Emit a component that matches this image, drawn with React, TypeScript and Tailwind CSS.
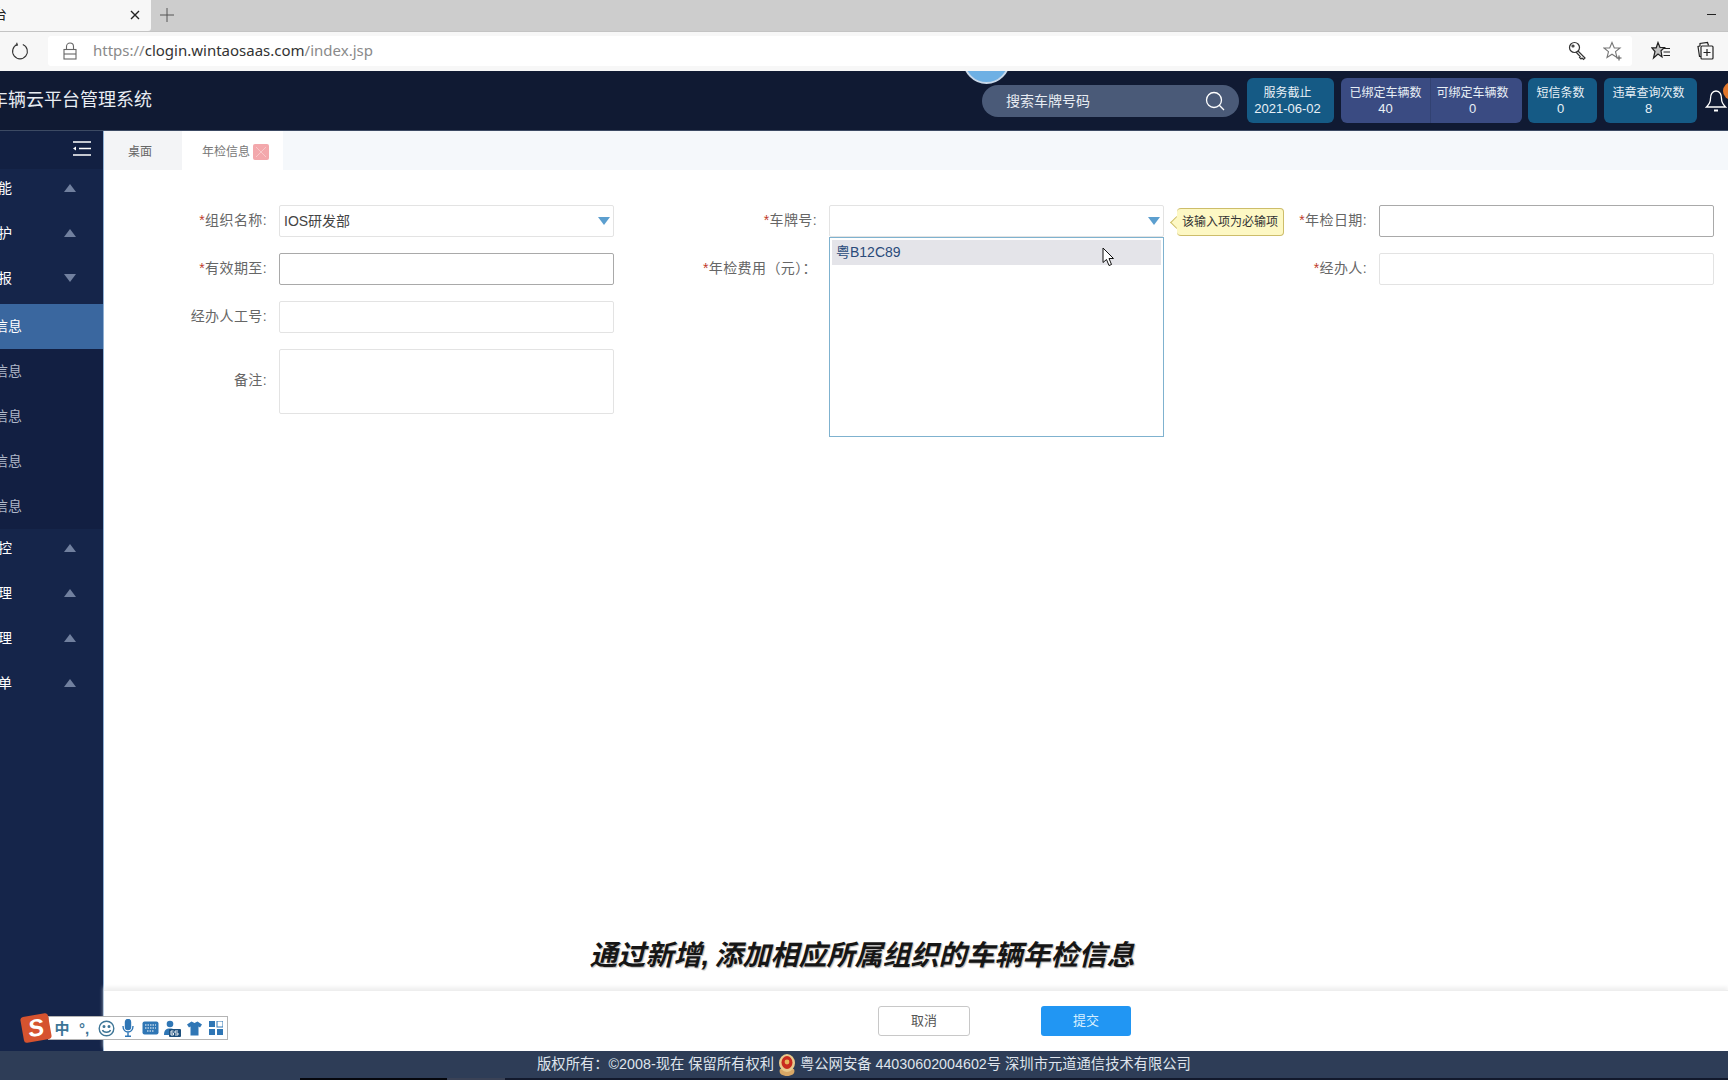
import React from "react";

const Tri = ({ down }: { down?: boolean }) => (
  <svg width="12" height="8" viewBox="0 0 12 8" className="shrink-0">
    <path d={down ? "M0 0H12L6 8Z" : "M6 0L12 8H0Z"} fill="#71809f" />
  </svg>
);

const Reload = () => (
  <svg width="18" height="18" viewBox="0 0 18 18" fill="none" stroke="#333" strokeWidth="1.1">
    <path d="M6.2 2.6A7.4 7.4 0 1 0 11.8 2.6" />
    <path d="M5.6 0.8 6.4 3 3.9 3.4" />
  </svg>
);

const LockIcon = () => (
  <svg width="14" height="18" viewBox="0 0 14 18" fill="none" stroke="#666" strokeWidth="1.1">
    <rect x="1" y="7.5" width="12" height="9.5" />
    <path d="M3.5 7.5V4.5a3.5 3.5 0 0 1 7 0v3" />
    <path d="M1 12h12" />
  </svg>
);

const KeyIcon = () => (
  <svg width="19" height="20" viewBox="0 0 19 20" fill="none" stroke="#333" strokeWidth="1.2">
    <circle cx="6.5" cy="6.5" r="5" />
    <path d="M10 10 17 17 15.5 18.5 14 17 13 18 11.5 16.5 12.2 15.5 8 11" />
    <circle cx="5" cy="5" r="1" />
  </svg>
);

const StarPlus = () => (
  <svg width="20" height="20" viewBox="0 0 20 20" fill="none" stroke="#777" strokeWidth="1.1">
    <path d="M9 1.5 11.3 7H17L12.5 10.7 14 16.5 9 13.2 4 16.5 5.5 10.7 1 7H6.7Z" />
    <path d="M16 14.5V19.5M13.5 17H18.5" stroke="#555" />
  </svg>
);

const FavList = () => (
  <svg width="20" height="20" viewBox="0 0 20 20" fill="none" stroke="#222" strokeWidth="1.2">
    <path d="M7 1.5 9 6.5H13.5L10 9.8 11 16 7 13 2.5 17 4 10.5 0.8 6.8H5.2Z" fill="#222" fillOpacity="0.25" />
    <path d="M12.5 7.5H19M12.5 11H19M12.5 14.5H19" />
  </svg>
);

const Collections = () => (
  <svg width="18" height="20" viewBox="0 0 18 20" fill="none" stroke="#222" strokeWidth="1.2">
    <path d="M4 5 2 5.5 3.5 15.5 5 15.5" />
    <path d="M4 5 4 2.5 11.5 1.5 12.5 4.5" />
    <rect x="5" y="5" width="12" height="13" rx="1" />
    <path d="M11 8V15M7.5 11.5H14.5" />
  </svg>
);

const SearchIcon = () => (
  <svg width="20" height="20" viewBox="0 0 20 20" fill="none" stroke="#ffffff" strokeWidth="1.3">
    <circle cx="9" cy="9" r="7.5" />
    <path d="M14.3 14.3 19 19" />
  </svg>
);

const Bell = () => (
  <svg width="22" height="24" viewBox="0 0 22 24" fill="none" stroke="#ffffff" strokeWidth="1.3">
    <path d="M11 2C7 2 5.5 6 5.5 9.5 5.5 13.5 3.5 16 1.5 18H20.5C18.5 16 16.5 13.5 16.5 9.5 16.5 6 15 2 11 2Z" />
    <path d="M9 21.5H13" strokeWidth="2" />
  </svg>
);

const MenuToggle = () => (
  <svg width="18" height="15" viewBox="0 0 18 15" fill="none" stroke="#ffffff" strokeWidth="1.3">
    <path d="M0 1H18M6 7.5H18M0 14H18" />
    <path d="M0 7.5 3 5.5V9.5Z" fill="#ffffff" stroke="none" />
  </svg>
);

const CloseTab = () => (
  <span className="flex h-4 w-4 items-center justify-center rounded-[2px] bg-[#f3a8ac]">
    <svg width="12" height="12" viewBox="0 0 12 12" fill="none" stroke="#f8c8ca" strokeWidth="1">
      <path d="M1 1 11 11M11 1 1 11" />
    </svg>
  </span>
);

const Arrow = () => (
  <svg width="12" height="8" viewBox="0 0 12 8" className="shrink-0">
    <path d="M0 0H12L6 8Z" fill="#5c9fcf" />
  </svg>
);

const Cursor = () => (
  <svg width="13" height="20" viewBox="0 0 13 20" className="absolute left-[272px] top-[9px]">
    <path d="M1 1V15.5L4.5 12.5 7 18.5 9.5 17.5 7 11.5H11.5Z" fill="#ffffff" stroke="#111111" strokeWidth="1" />
  </svg>
);

const Emblem = () => (
  <svg width="20" height="24" viewBox="0 0 20 24" className="mx-[3px] shrink-0">
    <path d="M3 16C1 21 6 23 10 23S19 21 17 16Z" fill="#d8a766" />
    <ellipse cx="10" cy="10" rx="8" ry="9" fill="#e9c98c" />
    <ellipse cx="10" cy="9.5" rx="5.5" ry="6.5" fill="#c92a1e" />
    <circle cx="10" cy="9" r="2.4" fill="#e8b35a" />
  </svg>
);

const Stat = ({ title, value, w, bg }: { title: string; value: string; w: string; bg: string }) => (
  <div className={`flex h-full flex-col items-center justify-center leading-[16px] text-[#e8f0f6] ${w} ${bg}`}>
    <span className="text-[12px]">{title}</span>
    <span className="text-[13px]">{value}</span>
  </div>
);

const Field = ({
  label,
  star,
  strong,
  h = "h-8",
  arrow,
  value,
  children,
}: {
  label: string;
  star?: boolean;
  strong?: boolean;
  h?: string;
  arrow?: boolean;
  value?: string;
  children?: React.ReactNode;
}) => (
  <div className="relative flex items-center">
    <div className="flex-1 whitespace-nowrap pb-[2px] pr-3 text-right text-[14px] tracking-[0.4px] text-[#666666]">
      {star && <span className="text-[#c0392b]">*</span>}
      {label}
    </div>
    <div
      className={`flex w-[335px] items-center justify-between rounded-[2px] border bg-white pl-1 pr-[3px] text-[14px] text-[#444444] ${h} ${
        strong ? "border-[#a9a9a9]" : "border-[#e3e3e3]"
      }`}
    >
      <span>{value}</span>
      {arrow && <Arrow />}
    </div>
    {children}
  </div>
);

const MenuRow = ({ label, down }: { label: string; down?: boolean }) => (
  <div className="flex h-[45px] items-center justify-between pb-[7px] pr-[27px] text-[14px] text-white">
    <span className="-ml-[2px] w-[16px] overflow-hidden whitespace-nowrap">{label}</span>
    <Tri down={down} />
  </div>
);

const SubRow = ({ active }: { active?: boolean }) => (
  <div className={`flex h-[45px] items-center text-[14px] ${active ? "bg-[#3a679f] text-white" : "text-[#aeb7c8]"}`}>
    <span className="-ml-[6px]">信息</span>
  </div>
);

const Cell = ({ children }: { children: React.ReactNode }) => (
  <div className="flex w-[22px] shrink-0 items-center justify-center">{children}</div>
);

const ImeBar = () => (
  <div className="absolute bottom-[39px] left-[22px] flex items-center">
    <div className="z-10 flex h-[26px] w-[28px] rotate-[-10deg] items-center justify-center rounded-[3px] bg-[#d6532f] text-[24px] font-bold italic leading-none text-white">
      S
    </div>
    <div className="-ml-[2px] flex h-[24px] w-[180px] items-center border border-[#b4b4b4] bg-white pl-[2px]">
      <Cell>
        <span className="text-[15px] font-bold leading-none text-[#3d7596]">中</span>
      </Cell>
      <Cell>
        <span className="text-[15px] font-bold leading-none text-[#3d7596]">°,</span>
      </Cell>
      <Cell>
        <svg width="17" height="17" viewBox="0 0 17 17" fill="none" stroke="#3d7596" strokeWidth="1.4">
          <circle cx="8.5" cy="8.5" r="7.3" />
          <path d="M4.5 10C5.5 13 11.5 13 12.5 10" />
          <circle cx="6" cy="6.5" r="0.8" fill="#3d7596" />
          <circle cx="11" cy="6.5" r="0.8" fill="#3d7596" />
        </svg>
      </Cell>
      <Cell>
        <svg width="12" height="18" viewBox="0 0 12 18" fill="none" stroke="#2f76b5" strokeWidth="1.4">
          <rect x="3.5" y="0.5" width="5" height="10" rx="2.5" fill="#2f76b5" />
          <path d="M1 7C1 15 11 15 11 7M6 13V17M3 17.3H9" />
        </svg>
      </Cell>
      <Cell>
        <svg width="17" height="14" viewBox="0 0 17 14">
          <rect x="0.5" y="0.5" width="16" height="13" rx="2" fill="#2f76b5" />
          <path d="M3 4H14M3 7H14M5 10H12" stroke="#ffffff" strokeWidth="1.2" strokeDasharray="1.5 1" />
        </svg>
      </Cell>
      <Cell>
        <svg width="18" height="17" viewBox="0 0 18 17">
          <circle cx="7" cy="4" r="3.3" fill="#2f76b5" />
          <path d="M1 15C1 10 3 8.5 7 8.5S12 10 12 15Z" fill="#2f76b5" />
          <rect x="6" y="9" width="12" height="8" rx="1" fill="#1d4f7c" />
          <path d="M8 11H10.5M8 11V15H10.5V13H8.5M12 11H15M12 11V13H15V15H12" fill="none" stroke="#ffffff" strokeWidth="0.9" />
        </svg>
      </Cell>
      <Cell>
        <svg width="15" height="15" viewBox="0 0 15 15">
          <path d="M4.5 0.5 7.5 2 10.5 0.5 15 3.5 13 6.5 11.5 5.5V14.5H3.5V5.5L2 6.5 0 3.5Z" fill="#2f76b5" />
        </svg>
      </Cell>
      <Cell>
        <svg width="14" height="14" viewBox="0 0 14 14" fill="#2f76b5">
          <rect x="0" y="0" width="6" height="6" />
          <rect x="8" y="0" width="6" height="6" fill="none" stroke="#2f76b5" />
          <rect x="0" y="8" width="6" height="6" />
          <rect x="8" y="8" width="6" height="6" />
        </svg>
      </Cell>
    </div>
  </div>
);

export default function App() {
  return (
    <div className="relative flex h-[1080px] w-[1728px] flex-col overflow-hidden bg-white font-['Liberation_Sans','Noto_Sans_CJK_SC',sans-serif]">
      {/* browser tab strip */}
      <div className="flex h-[31px] shrink-0 items-center justify-between bg-[#cdcdcd] pr-[12px]">
        <div className="flex h-full items-center">
          <div className="flex h-full w-[151px] items-center justify-between rounded-br-[3px] bg-[#f7f7f7] pb-[2px] pr-[11px] text-[14px] text-[#222222]">
            <span className="-ml-[7px]">台</span>
            <svg width="10" height="10" viewBox="0 0 10 10" fill="none" stroke="#222222" strokeWidth="1.4">
              <path d="M1 1 9 9M9 1 1 9" />
            </svg>
          </div>
          <svg width="14" height="14" viewBox="0 0 14 14" fill="none" stroke="#555555" strokeWidth="1" className="mb-[2px] ml-[9px]">
            <path d="M7 0V14M0 7H14" />
          </svg>
        </div>
        <div className="mb-[2px] h-[1px] w-[9px] bg-[#222222]" />
      </div>

      {/* address bar */}
      <div className="flex h-[40px] shrink-0 items-center border-t border-[#c4c4c4] bg-[#f7f7f7] pb-[2px]">
        <div className="flex w-[48px] justify-end pr-[19px]">
          <Reload />
        </div>
        <div className="flex h-[30px] w-[1584px] items-center rounded-[3px] bg-white pl-[15px]">
          <LockIcon />
          <span className="ml-[16px] font-['Noto_Sans',sans-serif] text-[15px] text-[#8a8a8a]">
            https://<span className="text-[#333333]">clogin.wintaosaas.com</span>/index.jsp
          </span>
          <div className="ml-auto flex items-center gap-[16px] pr-[9px]">
            <KeyIcon />
            <StarPlus />
          </div>
        </div>
        <div className="flex flex-1 items-center gap-[25px] pl-[19px]">
          <FavList />
          <Collections />
        </div>
      </div>

      {/* app header */}
      <div className="relative flex h-[60px] shrink-0 items-center justify-between overflow-hidden border-b border-[#3c4a63] bg-[#101a33] text-white">
        <div className="absolute left-[963px] top-[-34px] h-[47px] w-[47px] rounded-full border-2 border-[#c8d8ea] bg-[#6eb0e4]" />
        <span className="-ml-[10px] whitespace-nowrap text-[18px] text-[#e9edf3]">车辆云平台管理系统</span>
        <div className="flex h-[45px] items-center">
          <div className="relative flex h-[32px] w-[257px] items-center justify-between rounded-full bg-[#4a5a78] pl-[24px] pr-[14px] text-[14px] text-[#e8ecf2]">
            <span className="pt-[1px]">搜索车牌号码</span>
            <SearchIcon />
          </div>
          <div className="ml-[8px] h-full w-[87px] overflow-hidden rounded-[6px]">
            <Stat title="服务截止" value="2021-06-02" w="w-full pr-[6px]" bg="bg-[#155a85]" />
          </div>
          <div className="ml-[7px] flex h-full w-[181px] overflow-hidden rounded-[6px]">
            <Stat title="已绑定车辆数" value="40" w="w-[90px] border-r border-[#324272]" bg="bg-[#3a4b82]" />
            <Stat title="可绑定车辆数" value="0" w="flex-1 pr-[8px]" bg="bg-[#3a4b82]" />
          </div>
          <div className="ml-[6px] h-full w-[69px] overflow-hidden rounded-[6px]">
            <Stat title="短信条数" value="0" w="w-full pr-[4px]" bg="bg-[#155a85]" />
          </div>
          <div className="ml-[7px] h-full w-[93px] overflow-hidden rounded-[6px]">
            <Stat title="违章查询次数" value="8" w="w-full pr-[4px]" bg="bg-[#155a85]" />
          </div>
          <div className="relative ml-[8px] w-[23px]">
            <Bell />
            <div className="absolute -top-[7px] left-[18px] h-[18px] w-[18px] rounded-full bg-[#e0762c]" />
          </div>
        </div>
      </div>

      {/* main */}
      <div className="flex min-h-0 flex-1">
        <aside className="flex w-[104px] shrink-0 flex-col border-r-[1px] border-[#8fb0d4] bg-[#15254a]">
          <div className="flex h-[38px] items-center justify-end bg-[#122042] pb-[4px] pr-[12px]">
            <MenuToggle />
          </div>
          <MenuRow label="能" />
          <MenuRow label="护" />
          <MenuRow label="报" down />
          <div className="bg-[#121f42]">
            <SubRow active />
            <SubRow />
            <SubRow />
            <SubRow />
            <SubRow />
          </div>
          <MenuRow label="控" />
          <MenuRow label="理" />
          <MenuRow label="理" />
          <MenuRow label="单" />
        </aside>

        <div className="flex min-w-0 flex-1 flex-col">
          {/* page tabs */}
          <div className="flex h-[39px] shrink-0 bg-[#f5f8fb] text-[12px]">
            <div className="flex w-[78px] items-center justify-center bg-[#f3f4f6] pr-[6px] pt-[2px] text-[#666666]">桌面</div>
            <div className="flex w-[101px] items-center justify-center gap-[3px] bg-white pl-[6px] pt-[2px] text-[#777777]">
              <span>年检信息</span>
              <CloseTab />
            </div>
          </div>

          {/* form */}
          <div className="flex-1">
            <div className="grid grid-cols-[510px_550px_550px] gap-y-4 pt-[35px]">
              <Field label="组织名称:" star arrow value="IOS研发部" />
              <Field label="车牌号:" star arrow>
                <div className="absolute left-[215px] top-[32px] z-10 h-[200px] w-[335px] border border-[#7fb2cf] bg-white p-[2px]">
                  <div className="flex h-[25px] items-center bg-[#e4e4e9] pl-[4px] text-[14px] text-[#2a4a7a]">粤B12C89</div>
                  <Cursor />
                </div>
                <div className="absolute left-[558px] top-[3px] flex h-[28px] items-center">
                  <div className="-mr-[4px] h-[9px] w-[9px] rotate-45 border-b border-l border-[#cdbd6a] bg-[#fdf8c4]" />
                  <div className="z-10 flex h-[28px] w-[107px] items-center justify-center whitespace-nowrap rounded-[4px] border border-l-0 border-[#cdbd6a] bg-[#fdf8c4] text-[12px] text-[#333333]">
                    该输入项为必输项
                  </div>
                </div>
              </Field>
              <Field label="年检日期:" star strong />

              <Field label="有效期至:" star strong />
              <Field label={"年检费用\uFF08元\uFF09\uFF1A"} star />
              <Field label="经办人:" star />

              <Field label="经办人工号:" />
              <div />
              <div />

              <Field label="备注:" h="h-[65px]" />
            </div>
          </div>

          {/* caption */}
          <div className="flex h-[56px] shrink-0 items-center justify-center pb-[13px] pr-[108px] text-[28px] font-bold italic text-[#161616] [text-shadow:1px_1px_1px_#bbbbbb]">
            <span>
              通过新增<span className="mr-[5px]">,</span>添加相应所属组织的车辆年检信息
            </span>
          </div>

          {/* actions */}
          <div className="flex h-[61px] shrink-0 items-center gap-[71px] border-t border-[#eeeeee] bg-white pb-[1px] pl-[774px] shadow-[0_-3px_4px_#f0f0f0]">
            <div className="flex h-[30px] w-[92px] items-center justify-center rounded-[3px] border border-[#c8c8c8] bg-white text-[13px] text-[#555555]">
              取消
            </div>
            <div className="flex h-[30px] w-[90px] items-center justify-center rounded-[3px] bg-[#2196f3] text-[13px] text-[#d8efff]">
              提交
            </div>
          </div>
        </div>
      </div>

      {/* page footer */}
      <div className="flex h-[27px] shrink-0 items-center justify-center whitespace-nowrap bg-[#2e3d57] pt-[1px] text-[14.3px] text-[#dfe4ec]">
        {"版权所有\uFF1A"}©2008-现在 保留所有权利
        <Emblem />
        粤公网安备 44030602004602号 深圳市元道通信技术有限公司
      </div>
      <div className="flex h-[2px] shrink-0 bg-[#12192c]">
        <div className="w-[300px] bg-[#2e3d57]" />
        <div className="w-[147px] bg-[#05070d]" />
        <div className="w-[58px] bg-[#3a4256]" />
      </div>

      <ImeBar />
    </div>
  );
}
